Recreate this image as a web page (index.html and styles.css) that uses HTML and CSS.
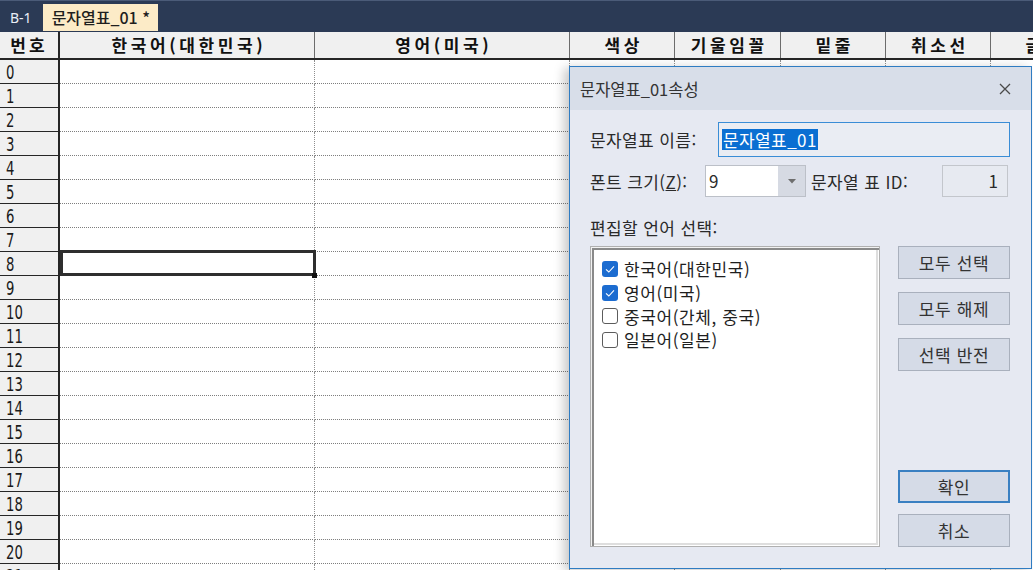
FILE: index.html
```html
<!DOCTYPE html>
<html lang="ko">
<head>
<meta charset="utf-8">
<title>문자열표_01</title>
<link rel="stylesheet" href="styles.css">
</head>
<body>
<div class="app">
  <div class="tabbar">
    <span class="tab-id">B-1</span>
    <span class="tab">문자열표_01 *</span>
  </div>
  <div class="grid">
    <div class="row head">
      <div class="c w-num">번호</div>
      <div class="c w-lang">한국어(대한민국)</div>
      <div class="c w-lang">영어(미국)</div>
      <div class="c w-attr">색상</div>
      <div class="c w-attr2">기울임꼴</div>
      <div class="c w-attr">밑줄</div>
      <div class="c w-attr">취소선</div>
      <div class="c w-attr">글꼴</div>
    </div>
    <div class="row"><div class="num w-num"><span>0</span></div><div class="cell w-lang"></div><div class="cell w-lang"></div><div class="cell w-attr"></div><div class="cell w-attr2"></div><div class="cell w-attr"></div><div class="cell w-attr"></div><div class="cell w-attr"></div></div>
    <div class="row"><div class="num w-num"><span>1</span></div><div class="cell w-lang"></div><div class="cell w-lang"></div><div class="cell w-attr"></div><div class="cell w-attr2"></div><div class="cell w-attr"></div><div class="cell w-attr"></div><div class="cell w-attr"></div></div>
    <div class="row"><div class="num w-num"><span>2</span></div><div class="cell w-lang"></div><div class="cell w-lang"></div><div class="cell w-attr"></div><div class="cell w-attr2"></div><div class="cell w-attr"></div><div class="cell w-attr"></div><div class="cell w-attr"></div></div>
    <div class="row"><div class="num w-num"><span>3</span></div><div class="cell w-lang"></div><div class="cell w-lang"></div><div class="cell w-attr"></div><div class="cell w-attr2"></div><div class="cell w-attr"></div><div class="cell w-attr"></div><div class="cell w-attr"></div></div>
    <div class="row"><div class="num w-num"><span>4</span></div><div class="cell w-lang"></div><div class="cell w-lang"></div><div class="cell w-attr"></div><div class="cell w-attr2"></div><div class="cell w-attr"></div><div class="cell w-attr"></div><div class="cell w-attr"></div></div>
    <div class="row"><div class="num w-num"><span>5</span></div><div class="cell w-lang"></div><div class="cell w-lang"></div><div class="cell w-attr"></div><div class="cell w-attr2"></div><div class="cell w-attr"></div><div class="cell w-attr"></div><div class="cell w-attr"></div></div>
    <div class="row"><div class="num w-num"><span>6</span></div><div class="cell w-lang"></div><div class="cell w-lang"></div><div class="cell w-attr"></div><div class="cell w-attr2"></div><div class="cell w-attr"></div><div class="cell w-attr"></div><div class="cell w-attr"></div></div>
    <div class="row"><div class="num w-num"><span>7</span></div><div class="cell w-lang"></div><div class="cell w-lang"></div><div class="cell w-attr"></div><div class="cell w-attr2"></div><div class="cell w-attr"></div><div class="cell w-attr"></div><div class="cell w-attr"></div></div>
    <div class="row"><div class="num w-num"><span>8</span></div><div class="cell w-lang sel"></div><div class="cell w-lang"></div><div class="cell w-attr"></div><div class="cell w-attr2"></div><div class="cell w-attr"></div><div class="cell w-attr"></div><div class="cell w-attr"></div></div>
    <div class="row"><div class="num w-num"><span>9</span></div><div class="cell w-lang"></div><div class="cell w-lang"></div><div class="cell w-attr"></div><div class="cell w-attr2"></div><div class="cell w-attr"></div><div class="cell w-attr"></div><div class="cell w-attr"></div></div>
    <div class="row"><div class="num w-num"><span>10</span></div><div class="cell w-lang"></div><div class="cell w-lang"></div><div class="cell w-attr"></div><div class="cell w-attr2"></div><div class="cell w-attr"></div><div class="cell w-attr"></div><div class="cell w-attr"></div></div>
    <div class="row"><div class="num w-num"><span>11</span></div><div class="cell w-lang"></div><div class="cell w-lang"></div><div class="cell w-attr"></div><div class="cell w-attr2"></div><div class="cell w-attr"></div><div class="cell w-attr"></div><div class="cell w-attr"></div></div>
    <div class="row"><div class="num w-num"><span>12</span></div><div class="cell w-lang"></div><div class="cell w-lang"></div><div class="cell w-attr"></div><div class="cell w-attr2"></div><div class="cell w-attr"></div><div class="cell w-attr"></div><div class="cell w-attr"></div></div>
    <div class="row"><div class="num w-num"><span>13</span></div><div class="cell w-lang"></div><div class="cell w-lang"></div><div class="cell w-attr"></div><div class="cell w-attr2"></div><div class="cell w-attr"></div><div class="cell w-attr"></div><div class="cell w-attr"></div></div>
    <div class="row"><div class="num w-num"><span>14</span></div><div class="cell w-lang"></div><div class="cell w-lang"></div><div class="cell w-attr"></div><div class="cell w-attr2"></div><div class="cell w-attr"></div><div class="cell w-attr"></div><div class="cell w-attr"></div></div>
    <div class="row"><div class="num w-num"><span>15</span></div><div class="cell w-lang"></div><div class="cell w-lang"></div><div class="cell w-attr"></div><div class="cell w-attr2"></div><div class="cell w-attr"></div><div class="cell w-attr"></div><div class="cell w-attr"></div></div>
    <div class="row"><div class="num w-num"><span>16</span></div><div class="cell w-lang"></div><div class="cell w-lang"></div><div class="cell w-attr"></div><div class="cell w-attr2"></div><div class="cell w-attr"></div><div class="cell w-attr"></div><div class="cell w-attr"></div></div>
    <div class="row"><div class="num w-num"><span>17</span></div><div class="cell w-lang"></div><div class="cell w-lang"></div><div class="cell w-attr"></div><div class="cell w-attr2"></div><div class="cell w-attr"></div><div class="cell w-attr"></div><div class="cell w-attr"></div></div>
    <div class="row"><div class="num w-num"><span>18</span></div><div class="cell w-lang"></div><div class="cell w-lang"></div><div class="cell w-attr"></div><div class="cell w-attr2"></div><div class="cell w-attr"></div><div class="cell w-attr"></div><div class="cell w-attr"></div></div>
    <div class="row"><div class="num w-num"><span>19</span></div><div class="cell w-lang"></div><div class="cell w-lang"></div><div class="cell w-attr"></div><div class="cell w-attr2"></div><div class="cell w-attr"></div><div class="cell w-attr"></div><div class="cell w-attr"></div></div>
    <div class="row"><div class="num w-num"><span>20</span></div><div class="cell w-lang"></div><div class="cell w-lang"></div><div class="cell w-attr"></div><div class="cell w-attr2"></div><div class="cell w-attr"></div><div class="cell w-attr"></div><div class="cell w-attr"></div></div>
    <div class="row"><div class="num w-num"><span>21</span></div><div class="cell w-lang"></div><div class="cell w-lang"></div><div class="cell w-attr"></div><div class="cell w-attr2"></div><div class="cell w-attr"></div><div class="cell w-attr"></div><div class="cell w-attr"></div></div>
  </div>

  <div class="dialog">
    <div class="dlg-title">
      <span>문자열표_01속성</span>
      <svg class="close" width="12" height="12" viewBox="0 0 12 12"><path d="M1 1 L11 11 M11 1 L1 11" stroke="#4a4a4a" stroke-width="1.3" fill="none"/></svg>
    </div>
    <div class="dlg-body">
      <div class="field-row r1">
        <span class="lbl l1">문자열표 이름:</span>
        <div class="input"><span class="hl">문자열표_01</span></div>
      </div>
      <div class="field-row r2">
        <span class="lbl l2">폰트 크기(<u>Z</u>):</span>
        <div class="combo"><span class="combo-val">9</span><span class="combo-btn"><svg width="8" height="5" viewBox="0 0 8 5"><path d="M0 0 H8 L4 4.5 Z" fill="#6e6e6e"/></svg></span></div>
        <span class="lbl l3">문자열 표 ID:</span>
        <div class="idbox">1</div>
      </div>
      <div class="section-lbl">편집할 언어 선택:</div>
      <div class="main">
        <div class="list">
          <div class="item"><span class="chk on"><svg width="16" height="16" viewBox="0 0 16 16"><path d="M4 8.3 L6.8 11 L12 5.3" stroke="#fff" stroke-width="1.1" fill="none"/></svg></span>한국어(대한민국)</div>
          <div class="item"><span class="chk on"><svg width="16" height="16" viewBox="0 0 16 16"><path d="M4 8.3 L6.8 11 L12 5.3" stroke="#fff" stroke-width="1.1" fill="none"/></svg></span>영어(미국)</div>
          <div class="item"><span class="chk"></span>중국어(간체, 중국)</div>
          <div class="item"><span class="chk"></span>일본어(일본)</div>
        </div>
        <div class="btns">
          <div class="grp g1">
            <div class="btn">모두 선택</div>
            <div class="btn">모두 해제</div>
            <div class="btn">선택 반전</div>
          </div>
          <div class="grp g2">
            <div class="btn primary">확인</div>
            <div class="btn">취소</div>
          </div>
        </div>
      </div>
    </div>
  </div>
</div>
</body>
</html>
```

FILE: styles.css
```css
* { box-sizing: border-box; }
html, body { margin: 0; padding: 0; }
body {
  width: 1033px;
  height: 570px;
  overflow: hidden;
  background: #fff;
  font-family: "Noto Sans CJK KR", "Noto Sans", sans-serif;
  color: #222;
}
.app {
  position: relative;
  width: 1033px;
  height: 570px;
  overflow: hidden;
}

/* tab bar */
.tabbar {
  height: 32px;
  background: #2b3a55;
  border-top: 1px solid #4b5b78;
  display: flex;
  align-items: flex-end;
  padding-left: 10px;
  padding-bottom: 1px;
}
.tab-id {
  color: #e9edf5;
  font-family: "Noto Sans", sans-serif;
  font-size: 14px;
  line-height: 26px;
  margin-right: 11px;
}
.tab {
  background: #fcebc7;
  color: #1e1e1e;
  font-size: 16px;
  font-weight: 500;
  height: 27px;
  line-height: 26px;
  padding: 0 8px 0 9px;
}

/* grid */
.grid { width: 1096px; }
.row {
  display: flex;
  height: 24px;
}
.w-num { width: 60px; flex: none; }
.w-lang { width: 255px; flex: none; }
.w-attr { width: 105px; flex: none; }
.w-attr2 { width: 106px; flex: none; }

.head {
  height: 28px;
  background: #f0f0f0;
  border-bottom: 2px solid #262626;
}
.head .c {
  border-right: 1px solid #6c6c6c;
  font-weight: 700;
  font-size: 17px;
  letter-spacing: 3.6px;
  text-indent: 3.6px;
  text-align: center;
  line-height: 26px;
  color: #111;
  white-space: nowrap;
  overflow: hidden;
}
.head .c.w-num { border-right: 2px solid #262626; letter-spacing: 3px; text-indent: 0; }

.num {
  background: #f0f0f0;
  border-right: 2px solid #262626;
  border-bottom: 1px solid #262626;
  padding-left: 6px;
  overflow: hidden;
}
.num span {
  display: inline-block;
  font-family: "DejaVu Sans", sans-serif;
  font-size: 20px;
  line-height: 15px;
  color: #1a1a1a;
  transform: scaleX(0.66);
  transform-origin: left top;
}
.cell {
  border-right: 1px dotted #8e8e8e;
  border-bottom: 1px dotted #7e7e7e;
}
.cell.sel { position: relative; }
.cell.sel::after {
  content: "";
  position: absolute;
  left: 0;
  top: -2px;
  right: -2px;
  bottom: -1px;
  border: 3px solid #2e2e2e;
}
.cell.sel::before {
  content: "";
  position: absolute;
  right: -3px;
  bottom: -3px;
  width: 5px;
  height: 5px;
  background: #111;
  z-index: 1;
}

/* dialog */
.dialog {
  position: absolute;
  left: 569px;
  top: 66px;
  width: 463px;
  height: 503px;
  border: 1px solid #2f7cc2;
  background: #e6e9f2;
  box-shadow: -5px 2px 10px rgba(0, 0, 0, 0.22);
  display: flex;
  flex-direction: column;
  font-size: 17px;
  color: #2a2a2a;
}
.dlg-title {
  height: 43px;
  flex: none;
  background: #d8dee9;
  display: flex;
  align-items: center;
  justify-content: space-between;
  padding: 0 20px 0 10px;
  color: #333;
  font-size: 16.5px;
}
.dlg-body {
  padding: 12px 21px 0 20px;
  display: flex;
  flex-direction: column;
}
.field-row {
  display: flex;
  align-items: center;
}
.lbl { letter-spacing: 0.4px; white-space: nowrap; }
.r1 { height: 35px; }
.l1 { width: 128px; flex: none; }
.input {
  width: 292px;
  height: 35px;
  border: 1px solid #3a8dd6;
  background: #eaedf3;
  display: flex;
  align-items: center;
  padding-left: 3px;
}
.hl {
  background: #0a6fd2;
  color: #fff;
  padding: 0 1px;
  line-height: 21px;
  letter-spacing: 0.4px;
}
.r2 { height: 32px; margin-top: 8px; }
.l2 { width: 115px; flex: none; }
.combo {
  width: 101px;
  height: 32px;
  flex: none;
  background: #fff;
  border: 1px solid #bcc0c8;
  display: flex;
  justify-content: space-between;
}
.combo-val { padding-left: 3px; line-height: 30px; }
.combo-btn {
  width: 27px;
  background: #d6dae3;
  display: flex;
  align-items: center;
  justify-content: center;
}
.l3 { width: 131px; flex: none; margin-left: 5px; }
.idbox {
  width: 66px;
  height: 32px;
  flex: none;
  border: 1px solid #c3c6cc;
  background: #e7eaf1;
  text-align: right;
  padding-right: 9px;
  line-height: 30px;
}
.section-lbl {
  margin-top: 21px;
  line-height: 20px;
  letter-spacing: 0.4px;
}
.main {
  margin-top: 8px;
  display: flex;
  gap: 18px;
}
.list {
  width: 290px;
  height: 301px;
  background: #fff;
  border: 1px solid #b0b0b0;
  box-shadow: inset 1px 1px 0 #f2f2f2, inset 3px 3px 0 #8a8a8a, inset -1px -1px 0 #fff, inset -3px -3px 0 #dedede;
  padding: 10px 8px 0 11px;
}
.item {
  display: flex;
  align-items: center;
  height: 23.7px;
  gap: 6px;
  color: #1e1e1e;
  white-space: nowrap;
  letter-spacing: 0.6px;
}
.chk {
  width: 16px;
  height: 16px;
  flex: none;
  border-radius: 3px;
  border: 1px solid #5c5c5c;
  background: #fff;
  display: flex;
}
.chk.on {
  border: none;
  background: #1c6cd0;
}
.btns {
  width: 112px;
  height: 301px;
  display: flex;
  flex-direction: column;
  justify-content: space-between;
}
.grp { display: flex; flex-direction: column; }
.g1 { gap: 13px; }
.g2 { gap: 11px; }
.btn {
  height: 33px;
  background: #d5dbe7;
  border: 1px solid #a9b0bd;
  text-align: center;
  line-height: 31px;
  color: #333;
  letter-spacing: 0.6px;
}
.btn.primary {
  border: 2px solid #3a80c2;
  line-height: 29px;
}
```
